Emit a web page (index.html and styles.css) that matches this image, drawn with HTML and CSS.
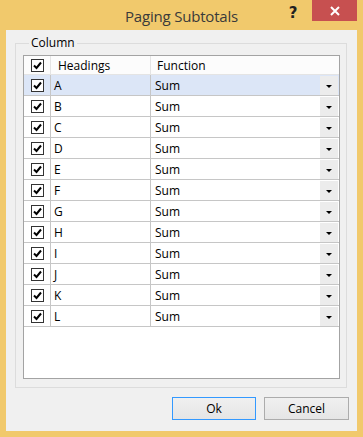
FILE: index.html
```html
<!DOCTYPE html>
<html lang="en">
<head>
    <meta charset="UTF-8">
    <meta name="viewport" content="width=device-width, initial-scale=1.0">
    <title>Paging Subtotals</title>
    <link rel="stylesheet" href="styles.css">
</head>
<body>
    <div class="window">
        <div class="titlebar">
            <div class="title">Paging Subtotals</div>
            <div class="controls">
                <span class="help">?</span>
                <span class="close">
                    <svg width="12" height="10" viewBox="0 0 12 10"><path d="M2 1 L10 9 M10 1 L2 9" stroke="#fff" stroke-width="2"/></svg>
                </span>
            </div>
        </div>
        <div class="client">
            <fieldset class="group">
                <legend>Column</legend>
                <div class="grid">
                    <div class="row header">
                        <div class="cell check"><span class="box"><svg width="11" height="11" viewBox="0 0 11 11"><path d="M2 5.5 L4.5 8 L9 2.5" fill="none" stroke="#000" stroke-width="2"/></svg></span></div>
                        <div class="cell name">Headings</div>
                        <div class="cell func">Function</div>
                    </div>
                    <div id="rows"></div>
                </div>
            </fieldset>
            <div class="actions">
                <button class="btn default">Ok</button>
                <button class="btn">Cancel</button>
            </div>
        </div>
    </div>

    <script>
        const letters = ['A', 'B', 'C', 'D', 'E', 'F', 'G', 'H', 'I', 'J', 'K', 'L'];
        const rows = document.getElementById('rows');
        const tick = '<svg width="11" height="11" viewBox="0 0 11 11"><path d="M2 5.5 L4.5 8 L9 2.5" fill="none" stroke="#000" stroke-width="2"/></svg>';

        letters.forEach((letter, i) => {
            const row = document.createElement('div');
            row.className = i === 0 ? 'row selected' : 'row';
            row.innerHTML =
                `<div class="cell check"><span class="box">${tick}</span></div>` +
                `<div class="cell name">${letter}</div>` +
                `<div class="cell func"><span>Sum</span><span class="drop"><span class="arrow"></span></span></div>`;
            rows.appendChild(row);
        });
    </script>
</body>
</html>
```

FILE: styles.css
```css
* {
    margin: 0;
    padding: 0;
    box-sizing: border-box;
    font-family: 'Open Sans', 'Noto Sans', sans-serif;
}

body {
    width: 363px;
    height: 437px;
    overflow: hidden;
}

.window {
    display: flex;
    flex-direction: column;
    width: 363px;
    height: 437px;
    background: #f1c96c;
}

.titlebar {
    position: relative;
    height: 30px;
    display: flex;
    justify-content: center;
    align-items: center;
}

.titlebar .title {
    font-size: 15px;
    color: #3a3a3a;
    padding-top: 1px;
    letter-spacing: -0.2px;
}

.titlebar .controls {
    position: absolute;
    top: 0;
    right: 6px;
    display: flex;
    align-items: flex-start;
}

.titlebar .help {
    width: 26px;
    height: 21px;
    font-family: 'DejaVu Sans', sans-serif;
    font-size: 15px;
    font-weight: 700;
    color: #222;
    text-align: center;
    line-height: 26px;
}

.titlebar .close {
    width: 45px;
    height: 21px;
    margin-left: 6px;
    background: #c75050;
    display: flex;
    justify-content: center;
    align-items: center;
}

.client {
    flex: 1;
    margin: 0 6px 6px;
    background: #f0f0f0;
    display: flex;
    flex-direction: column;
}

.group {
    margin: 5px 10px 0 9px;
    padding: 4px 6px 7px 7px;
    border: 1px solid #dcdcdc;
    height: 353px;
}

.group legend {
    margin-left: 6px;
    padding: 0 2px;
    font-size: 12px;
    line-height: 16px;
    color: #000;
}

.grid {
    height: 324px;
    border: 1px solid #a3a3a3;
    background: #fff;
}

.row {
    display: flex;
    height: 21px;
    border-bottom: 1px solid #c6c6c6;
    font-size: 12px;
    color: #000;
}

.row.header {
    height: 19px;
    border-bottom: 1px solid #e4e4e4;
    background: #fcfcfc;
}

.row.selected {
    background: #dce6f7;
}

.cell {
    display: flex;
    align-items: center;
    border-right: 1px solid #c6c6c6;
}

.header .cell {
    border-right-color: #e4e4e4;
}

.cell.check {
    width: 27px;
    justify-content: center;
}

.cell.name {
    width: 100px;
    padding-left: 3px;
}

.header .cell.name {
    padding-left: 7px;
}

.cell.func {
    flex: 1;
    border-right: none;
    padding-left: 4px;
    justify-content: space-between;
}

.header .cell.func {
    padding-left: 6px;
}

.box {
    width: 13px;
    height: 13px;
    border: 1px solid #333;
    background: #fff;
    display: flex;
    justify-content: center;
    align-items: center;
}

.drop {
    width: 18px;
    height: 19px;
    margin-right: 1px;
    background: #ececec;
    display: flex;
    justify-content: center;
    align-items: center;
}

.arrow {
    width: 0;
    height: 0;
    border-left: 3px solid transparent;
    border-right: 3px solid transparent;
    border-top: 3px solid #000;
    margin-top: 2px;
}

.actions {
    display: flex;
    justify-content: flex-end;
    gap: 8px;
    margin: 9px 8px 0 0;
}

.btn {
    width: 85px;
    height: 23px;
    border: 1px solid #acacac;
    background: linear-gradient(#f0f0f0, #e5e5e5);
    font-size: 12px;
    color: #000;
}

.btn.default {
    width: 84px;
    border-color: #3399ff;
}
```
